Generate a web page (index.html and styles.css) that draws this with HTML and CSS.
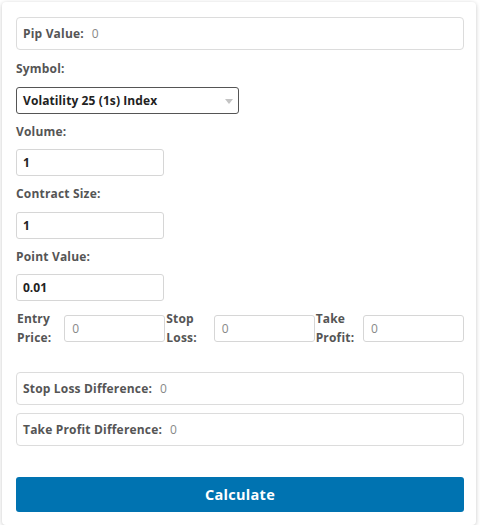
FILE: index.html
```html
<!DOCTYPE html>
<html lang="en">
<head>
<meta charset="utf-8">
<title>Pip Calculator</title>
<link rel="stylesheet" href="styles.css">
</head>
<body>
<div class="card">
  <div class="result"><span class="rlabel">Pip Value:</span><span class="rval">0</span></div>

  <div class="label mt first">Symbol:</div>
  <div class="select">
    <span>Volatility 25 (1s) Index</span>
    <svg class="arrow" width="8" height="5" viewBox="0 0 8 5"><path d="M0 0H8L4 5Z" fill="#c4c4c4"/></svg>
  </div>

  <div class="label mt">Volume:</div>
  <div class="input short"><span class="ival">1</span></div>

  <div class="label mt">Contract Size:</div>
  <div class="input short"><span class="ival">1</span></div>

  <div class="label mt">Point Value:</div>
  <div class="input short"><span class="ival">0.01</span></div>

  <div class="prices">
    <div class="pgroup">
      <div class="plabel">Entry<br>Price:</div>
      <div class="input pinput"><span class="pval">0</span></div>
    </div>
    <div class="pgroup">
      <div class="plabel">Stop<br>Loss:</div>
      <div class="input pinput"><span class="pval">0</span></div>
    </div>
    <div class="pgroup">
      <div class="plabel">Take<br>Profit:</div>
      <div class="input pinput"><span class="pval">0</span></div>
    </div>
  </div>

  <div class="result diff"><span class="rlabel">Stop Loss Difference:</span><span class="rval">0</span></div>
  <div class="result diff2"><span class="rlabel">Take Profit Difference:</span><span class="rval">0</span></div>

  <button class="btn">Calculate</button>
</div>
</body>
</html>
```

FILE: styles.css
```css
* { box-sizing: border-box; }
html, body { margin: 0; padding: 0; background: #ffffff; }
body {
  font-family: "Open Sans", "Liberation Sans", sans-serif;
  font-size: 12px;
  color: #555;
}
.card {
  margin: 2px 0 0 2px;
  width: 474px;
  height: 523px;
  padding: 15px 12px 12px 14px;
  background: #fff;
  border-radius: 4px;
  box-shadow: 0 1px 4px rgba(0,0,0,0.22);
  display: flex;
  flex-direction: column;
}
.result {
  height: 33px;
  border: 1px solid #dcdcdc;
  border-radius: 4px;
  padding: 0 6px;
  display: flex;
  align-items: center;
  flex-shrink: 0;
}
.rlabel { font-weight: 700; color: #555; letter-spacing: 0.18px; }
.rval { margin-left: 8px; color: #888; }
.label {
  font-weight: 700;
  color: #555;
  line-height: 15.5px;
  letter-spacing: 0.18px;
}
.mt { margin-top: 10px; margin-bottom: 10px; }
.first { margin-top: 11px; }
.select {
  width: 223px;
  height: 27px;
  border: 1px solid #555;
  border-radius: 3px;
  padding: 0 5px 0 6px;
  display: flex;
  align-items: center;
  justify-content: space-between;
  font-weight: 700;
  color: #222;
  letter-spacing: 0.1px;
  flex-shrink: 0;
}
.arrow { margin-top: 2px; }
.input {
  height: 27px;
  border: 1px solid #d6d6d6;
  border-radius: 3px;
  display: flex;
  align-items: center;
  padding: 0 6px;
  flex-shrink: 0;
}
.short { width: 148px; }
.ival { font-weight: 700; color: #222; }
.prices {
  margin-top: 8px;
  display: grid;
  grid-template-columns: repeat(3, 1fr);
}
.pgroup {
  display: flex;
  align-items: center;
}
.plabel {
  flex: 1;
  font-weight: 700;
  color: #555;
  line-height: 19px;
  padding-left: 1px;
  letter-spacing: 0.18px;
}
.pinput { width: 101px; padding: 0 7px; }
.pval { color: #888; }
.diff { margin-top: 25px; }
.diff2 { margin-top: 8px; }
.btn {
  margin-top: 31px;
  height: 35px;
  width: 100%;
  border: none;
  border-radius: 3px;
  background: #0073b1;
  color: #fff;
  font-family: inherit;
  font-size: 14.5px;
  font-weight: 700;
  letter-spacing: 0.3px;
}
```
